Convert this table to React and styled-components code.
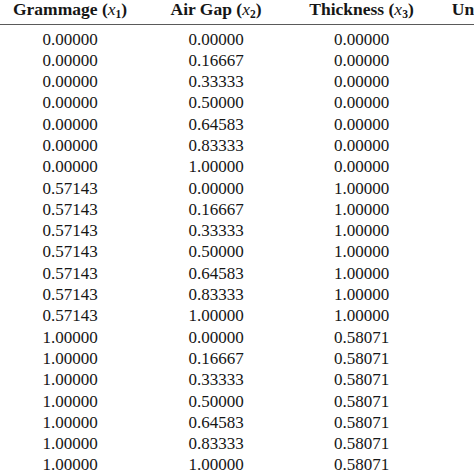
import styled, { createGlobalStyle } from "styled-components";

const GlobalStyle = createGlobalStyle`
  html, body {
    margin: 0;
    padding: 0;
    background: #fff;
    overflow: hidden;
  }
`;

const Page = styled.div`
  width: 474px;
  height: 474px;
  overflow: hidden;
  background: #fff;
  color: #161616;
  font-family: "Liberation Serif", "Times New Roman", serif;
`;

const Grid = styled.div`
  display: grid;
  grid-template-columns: 140px 152px 139px 150px;
  width: 581px;
`;

const Head = styled.div`
  text-align: center;
  white-space: nowrap;
  font-size: 17.5px;
  font-weight: 700;
  line-height: 19px;
  padding-bottom: 3px;
  border-bottom: 1.5px solid #5a5a5a;
`;

const Var = styled.span`
  font-style: italic;
  font-weight: 400;
`;

const Sub = styled.sub`
  font-size: 11.5px;
  font-style: normal;
  vertical-align: -3px;
  line-height: 1;
`;

const Body = styled.div`
  display: grid;
  grid-template-columns: 140px 152px 139px 150px;
  width: 581px;
  padding-top: 4px;
`;

const Cell = styled.div`
  text-align: center;
  white-space: nowrap;
  font-size: 17px;
  line-height: 21.3px;
`;

const airGaps = ["0.00000", "0.16667", "0.33333", "0.50000", "0.64583", "0.83333", "1.00000"];
const groups = [
  { grammage: "0.00000", thickness: "0.00000" },
  { grammage: "0.57143", thickness: "1.00000" },
  { grammage: "1.00000", thickness: "0.58071" },
];

const rows = groups.flatMap((g) =>
  airGaps.map((a) => ({ x1: g.grammage, x2: a, x3: g.thickness }))
);

function Label({ name, n }) {
  return (
    <>
      {name} (<Var>x</Var>
      <Sub>{n}</Sub>)
    </>
  );
}

export default function App() {
  return (
    <>
      <GlobalStyle />
      <Page>
        <Grid>
          <Head><Label name="Grammage" n={1} /></Head>
          <Head><Label name="Air Gap" n={2} /></Head>
          <Head><Label name="Thickness" n={3} /></Head>
          <Head>Uniformity (y)</Head>
        </Grid>
        <Body>
          {rows.flatMap((r, i) => [
            <Cell key={`a${i}`}>{r.x1}</Cell>,
            <Cell key={`b${i}`}>{r.x2}</Cell>,
            <Cell key={`c${i}`}>{r.x3}</Cell>,
            <Cell key={`d${i}`} />,
          ])}
        </Body>
      </Page>
    </>
  );
}
